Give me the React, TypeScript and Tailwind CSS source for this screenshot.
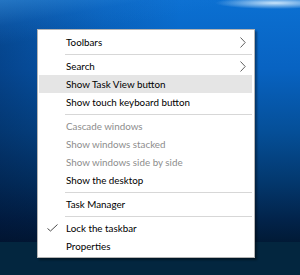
import React from "react";

type MenuEntry =
  | { kind: "item"; label: string; disabled?: boolean; submenu?: boolean; checked?: boolean; hover?: boolean }
  | { kind: "sep" };

const entries: MenuEntry[] = [
  { kind: "item", label: "Toolbars", submenu: true },
  { kind: "sep" },
  { kind: "item", label: "Search", submenu: true },
  { kind: "item", label: "Show Task View button", hover: true },
  { kind: "item", label: "Show touch keyboard button" },
  { kind: "sep" },
  { kind: "item", label: "Cascade windows", disabled: true },
  { kind: "item", label: "Show windows stacked", disabled: true },
  { kind: "item", label: "Show windows side by side", disabled: true },
  { kind: "item", label: "Show the desktop" },
  { kind: "sep" },
  { kind: "item", label: "Task Manager" },
  { kind: "sep" },
  { kind: "item", label: "Lock the taskbar", checked: true },
  { kind: "item", label: "Properties" },
];

const Chevron = () => (
  <svg width="6" height="11" viewBox="0 0 6 11" className="shrink-0">
    <path d="M0.5 0.5 L5.2 5.5 L0.5 10.5" fill="none" stroke="#606060" strokeWidth="1" />
  </svg>
);

const Check = () => (
  <svg width="11" height="8" viewBox="0 0 11 8">
    <path d="M0.5 4.5 L3.5 7 L10.5 0.5" fill="none" stroke="#4a4a4a" strokeWidth="1" />
  </svg>
);

export default function App() {
  return (
    <div className="relative w-[300px] h-[275px] overflow-hidden flex flex-col bg-[linear-gradient(to_bottom,#0b70d2_0%,#0863c2_25%,#054f98_48%,#03386e_66%,#02234a_80%,#011a36_88%)] font-['Lato',sans-serif]">
      {/* wallpaper shading and light streaks */}
      <div className="absolute inset-0 bg-[linear-gradient(to_right,rgba(0,10,40,0.35)_0%,rgba(0,10,40,0.1)_35%,rgba(0,0,0,0)_60%)]" />
      <div className="absolute inset-0 bg-[linear-gradient(170deg,rgba(60,150,230,0.55)_0%,rgba(30,120,215,0.2)_8%,rgba(0,0,0,0)_14%)]" />
      <div className="absolute inset-0 bg-[radial-gradient(ellipse_60px_6px_at_275px_3px,rgba(220,240,255,0.9),rgba(120,190,250,0)_100%)]" />

      <div className="flex-1" />
      {/* taskbar */}
      <div className="relative h-[33px] bg-[#03263f]" />

      {/* context menu */}
      <div className="absolute left-[37px] top-[29px] w-[218px] flex flex-col bg-white border border-[#b4b4b4] pt-[3px] pb-[2px] pl-[1px] pr-[2px] shadow-[2px_2px_2px_rgba(0,0,0,0.4)] text-[9.8px] leading-[18px]">
        {entries.map((e, i) =>
          e.kind === "sep" ? (
            <div key={i} className="h-[6px] flex items-center pl-[26px]">
              <div className="h-px flex-1 bg-[#d7d7d7]" />
            </div>
          ) : (
            <div
              key={i}
              className={`h-[18px] flex items-center whitespace-nowrap ${e.hover ? "bg-[#e5e5e5]" : ""} ${
                e.disabled ? "text-[#8d8d8d]" : "text-black"
              }`}
            >
              <div className="w-[27px] h-full flex items-center pl-[8px]">{e.checked && <Check />}</div>
              <span className="flex-1">{e.label}</span>
              {e.submenu && (
                <div className="pr-[6px] flex items-center">
                  <Chevron />
                </div>
              )}
            </div>
          )
        )}
      </div>
    </div>
  );
}
